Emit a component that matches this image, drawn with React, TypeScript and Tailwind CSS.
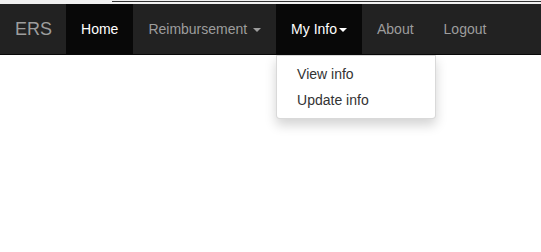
import React from "react";

const Caret = () => (
  <span className="ml-[2px] inline-block w-0 h-0 align-middle border-t-[4px] border-t-current border-x-[4px] border-x-transparent" />
);

export default function App() {
  return (
    <div className="w-[541px] h-[252px] bg-white font-['Liberation_Sans',Arial,sans-serif] text-[14px] leading-[20px]">
      <div className="h-[4px] bg-[#f0f0f0] pt-px">
        <div className="ml-[112px] h-px bg-[#333]" />
      </div>
      <nav className="h-[51px] bg-[#222] border-b border-[#080808] flex">
        <a className="h-[50px] pl-[15px] pr-[14px] py-[15px] text-[18px] leading-[20px] text-[#9d9d9d]">ERS</a>
        <ul className="flex">
          <li className="h-[50px] px-[15px] py-[15px] bg-[#080808] text-white">Home</li>
          <li className="h-[50px] px-[15px] py-[15px] text-[#9d9d9d]">
            Reimbursement <Caret />
          </li>
          <li className="relative h-[50px] bg-[#080808]">
            <div className="px-[15px] py-[15px] text-white">
              My Info<Caret />
            </div>
            <ul className="absolute left-0 top-[51px] z-10 min-w-[160px] py-[5px] bg-white border border-[rgba(0,0,0,0.15)] rounded-b-[4px] shadow-[0_6px_12px_rgba(0,0,0,0.175)] text-[#333]">
              <li className="px-[20px] py-[3px] whitespace-nowrap">View info</li>
              <li className="px-[20px] py-[3px] whitespace-nowrap">Update info</li>
            </ul>
          </li>
          <li className="h-[50px] px-[15px] py-[15px] text-[#9d9d9d]">About</li>
          <li className="h-[50px] px-[15px] py-[15px] text-[#9d9d9d]">Logout</li>
        </ul>
      </nav>
    </div>
  );
}
